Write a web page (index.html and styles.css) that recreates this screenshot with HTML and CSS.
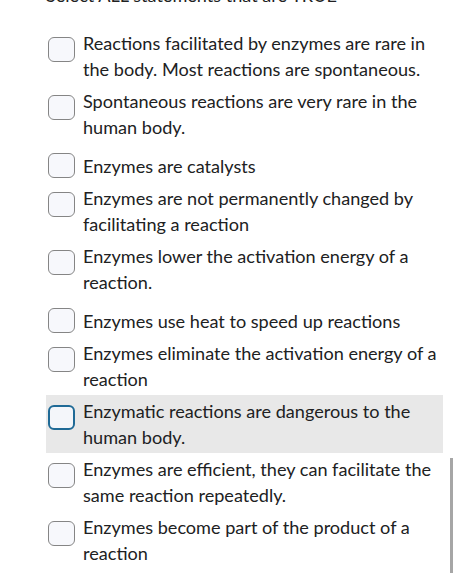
FILE: index.html
```html
<!DOCTYPE html>
<html lang="en">
<head>
    <meta charset="UTF-8">
    <title>Select ALL statements</title>
    <link rel="stylesheet" href="styles.css">
</head>
<body>
    <div class="question">
        <p class="prompt">Select ALL statements that are TRUE</p>

        <div class="options">
            <label class="option">
                <span class="box"></span>
                <span class="text">Reactions facilitated by enzymes are rare in the body. Most reactions are spontaneous.</span>
            </label>
            <label class="option spaced">
                <span class="box"></span>
                <span class="text">Spontaneous reactions are very rare in the human body.</span>
            </label>
            <label class="option single">
                <span class="box"></span>
                <span class="text">Enzymes are catalysts</span>
            </label>
            <label class="option">
                <span class="box"></span>
                <span class="text">Enzymes are not permanently changed by facilitating a reaction</span>
            </label>
            <label class="option spaced">
                <span class="box"></span>
                <span class="text">Enzymes lower the activation energy of a reaction.</span>
            </label>
            <label class="option single">
                <span class="box"></span>
                <span class="text">Enzymes use heat to speed up reactions</span>
            </label>
            <label class="option">
                <span class="box"></span>
                <span class="text">Enzymes eliminate the activation energy of a reaction</span>
            </label>
            <label class="option hovered">
                <span class="box"></span>
                <span class="text">Enzymatic reactions are dangerous to the human body.</span>
            </label>
            <label class="option">
                <span class="box"></span>
                <span class="text">Enzymes are efficient, they can facilitate the same reaction repeatedly.</span>
            </label>
            <label class="option">
                <span class="box"></span>
                <span class="text">Enzymes become part of the product of a reaction</span>
            </label>
        </div>
    </div>
    <div class="scroll-line"></div>
</body>
</html>
```

FILE: styles.css
```css
* {
    margin: 0;
    padding: 0;
    box-sizing: border-box;
}

body {
    font-family: Lato, 'Open Sans', sans-serif;
    background: #ffffff;
    color: #202122;
    width: 474px;
    height: 573px;
    overflow: hidden;
    position: relative;
}

.question {
    padding-left: 46px;
    width: 443px;
    margin-top: -18px;
}

.prompt {
    font-size: 18.1px;
    line-height: 26px;
    margin-bottom: 19px;
}

.options {
    display: flex;
    flex-direction: column;
}

.option {
    display: flex;
    align-items: flex-start;
    gap: 8px;
    padding: 3px 0 3px 2px;
    font-size: 18.1px;
    line-height: 26px;
}

.option.spaced {
    margin-bottom: 7px;
}

.option.hovered {
    background: #e8e8e8;
}

.box {
    flex: 0 0 auto;
    width: 27px;
    height: 25px;
    margin-top: 7px;
    border: 1.5px solid #858585;
    border-radius: 6px;
    background: #f7f8fc;
}

.option.single .box {
    margin-top: 0;
}

.option.hovered .box {
    border: 2.5px solid #1f6a96;
    background: #f4f6fa;
}

.text {
    flex: 1;
}

.scroll-line {
    position: absolute;
    left: 450px;
    top: 458px;
    bottom: 0;
    width: 3px;
    background: #a6a6a6;
}
```
